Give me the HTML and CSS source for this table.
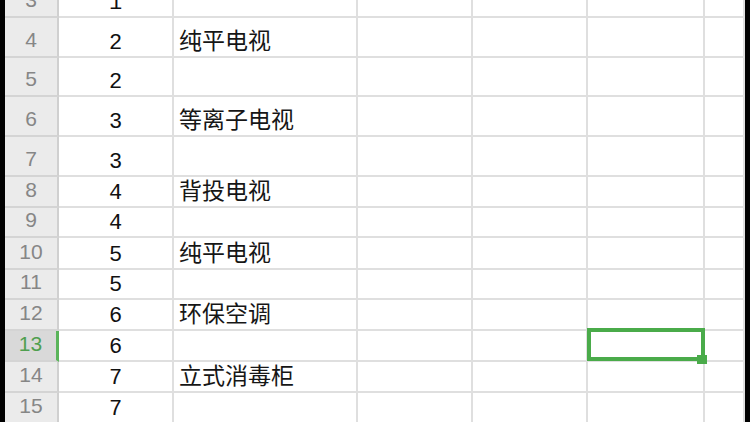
FILE: index.html
```html
<!DOCTYPE html>
<html lang="zh">
<head>
<meta charset="utf-8">
<title>Sheet</title>
<link rel="stylesheet" href="styles.css">
</head>
<body>
<div class="sheet">
  <div class="rh">3</div><div class="c num">1</div><div class="c txt"></div><div class="c"></div><div class="c"></div><div class="c"></div><div class="c"></div>
  <div class="rh">4</div><div class="c num">2</div><div class="c txt">纯平电视</div><div class="c"></div><div class="c"></div><div class="c"></div><div class="c"></div>
  <div class="rh">5</div><div class="c num">2</div><div class="c txt"></div><div class="c"></div><div class="c"></div><div class="c"></div><div class="c"></div>
  <div class="rh">6</div><div class="c num">3</div><div class="c txt">等离子电视</div><div class="c"></div><div class="c"></div><div class="c"></div><div class="c"></div>
  <div class="rh">7</div><div class="c num">3</div><div class="c txt"></div><div class="c"></div><div class="c"></div><div class="c"></div><div class="c"></div>
  <div class="rh">8</div><div class="c num">4</div><div class="c txt">背投电视</div><div class="c"></div><div class="c"></div><div class="c"></div><div class="c"></div>
  <div class="rh">9</div><div class="c num">4</div><div class="c txt"></div><div class="c"></div><div class="c"></div><div class="c"></div><div class="c"></div>
  <div class="rh">10</div><div class="c num">5</div><div class="c txt">纯平电视</div><div class="c"></div><div class="c"></div><div class="c"></div><div class="c"></div>
  <div class="rh">11</div><div class="c num">5</div><div class="c txt"></div><div class="c"></div><div class="c"></div><div class="c"></div><div class="c"></div>
  <div class="rh">12</div><div class="c num">6</div><div class="c txt">环保空调</div><div class="c"></div><div class="c"></div><div class="c"></div><div class="c"></div>
  <div class="rh active">13</div><div class="c num">6</div><div class="c txt"></div><div class="c"></div><div class="c"></div><div class="c selected"><span class="handle"></span></div><div class="c"></div>
  <div class="rh">14</div><div class="c num">7</div><div class="c txt">立式消毒柜</div><div class="c"></div><div class="c"></div><div class="c"></div><div class="c"></div>
  <div class="rh">15</div><div class="c num">7</div><div class="c txt"></div><div class="c"></div><div class="c"></div><div class="c"></div><div class="c"></div>
</div>
</body>
</html>
```

FILE: styles.css
```css
html, body {
  margin: 0;
  padding: 0;
  background: #000;
  height: 422px;
  overflow: hidden;
}

.sheet {
  margin: 0 5px;
  height: 422px;
  overflow: hidden;
  background: #fff;
  display: grid;
  grid-template-columns: 54px 115px 184px 115px 115px 117px 40px;
  grid-template-rows: 18px 40px 39px 40px 40px 31px 30px 32px 30px 31px 31px 31px 31px;
}

.rh {
  box-sizing: border-box;
  background: #ebebeb;
  border-right: 2px solid #d0d0d0;
  border-bottom: 2px solid #d4d4d4;
  display: flex;
  align-items: flex-end;
  justify-content: center;
  padding-bottom: 6px;
  overflow: hidden;
  font-family: "Liberation Sans", Arial, sans-serif;
  font-size: 21px;
  line-height: 1;
  color: #868686;
}

.rh.active {
  background: #d9d9d9;
  color: #4f9f4f;
  border-right: 3px solid #5ab45a;
}

.c {
  box-sizing: border-box;
  position: relative;
  border-right: 2px solid #dfdfdf;
  border-bottom: 2px solid #dfdfdf;
  display: flex;
  align-items: flex-end;
  min-width: 0;
}

.num {
  justify-content: center;
  padding-bottom: 1px;
  overflow: hidden;
  font-family: "Liberation Mono", "DejaVu Sans Mono", monospace;
  font-size: 22px;
  line-height: 1;
  color: #111;
}

.txt {
  padding-left: 5px;
  padding-bottom: 5px;
  font-family: "Noto Sans CJK SC", sans-serif;
  font-size: 23px;
  line-height: 23px;
  color: #161616;
  white-space: nowrap;
}

.selected::after {
  content: "";
  position: absolute;
  top: -3px;
  left: -1px;
  right: -2px;
  bottom: -1px;
  border: 4px solid #4aab4a;
  pointer-events: none;
}

.handle {
  position: absolute;
  right: -4px;
  bottom: -4px;
  width: 10px;
  height: 9px;
  background: #4aab4a;
  z-index: 2;
}
```
